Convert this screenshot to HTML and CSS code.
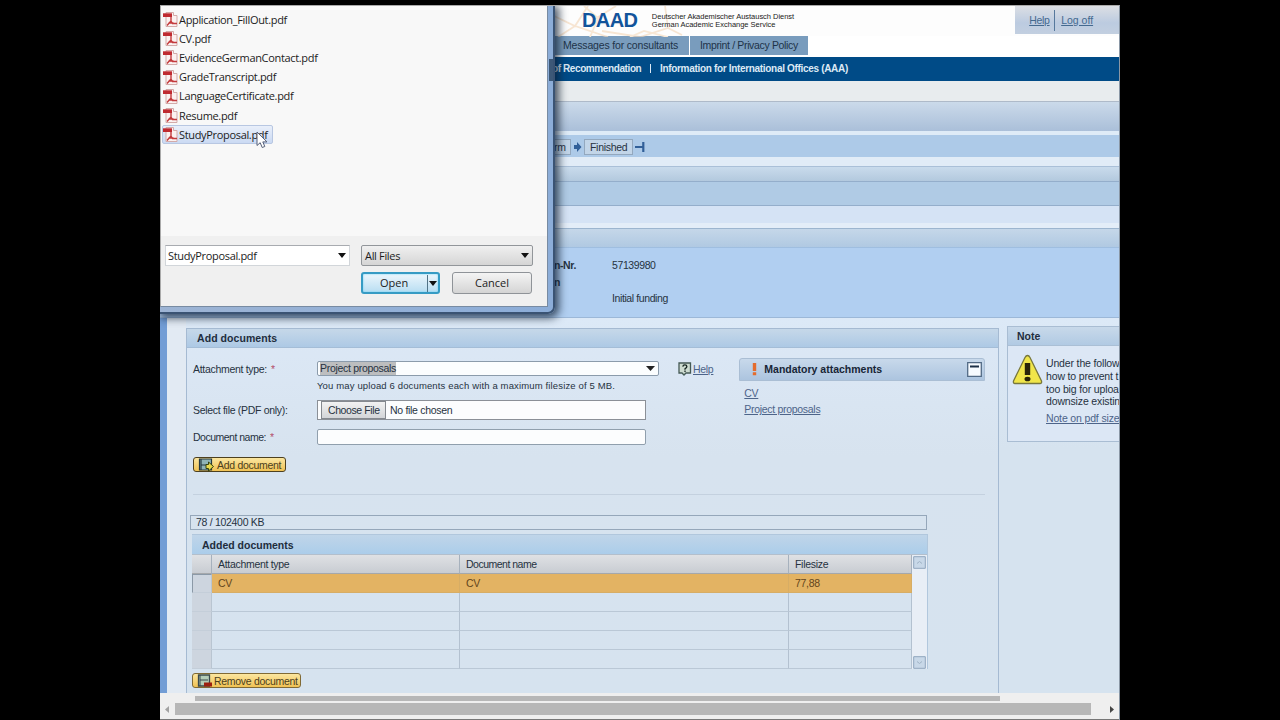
FILE: index.html
```html
<!DOCTYPE html>
<html lang="en">
<head>
<meta charset="utf-8">
<title>DAAD Portal - Add documents</title>
<link rel="stylesheet" href="styles.css">
</head>
<body>
<div class="stage">
  <header class="masthead">
    <svg class="web" width="170" height="31" viewBox="0 0 170 31" fill="none" stroke="#f5d9bc" stroke-width="1.800"><path d="M0 8L25 20L38 0M8 31L25 20L58 31M45 13L66 0M52 25L90 31L118 22L132 29M115 0L118 22" opacity=".65"/><path d="M34 0L48 12L40 31M80 31L94 25L118 31" stroke="#f9e8d5"/></svg>
    <div class="logo">DAAD</div>
    <div class="tagline"><div class="tag-de">Deutscher Akademischer Austausch Dienst</div><div class="tag-en">German Academic Exchange Service</div></div>
    <div class="session"><a class="s-help">Help</a><i class="sep"></i><a class="s-log">Log off</a></div>
  </header>
  <nav class="tabs"><span class="tab tab-msg"><b class="t-msg">Messages for consultants</b></span><span class="tab tab-imp"><b class="t-imp">Imprint / Privacy Policy</b></span></nav>
  <nav class="mainnav"><span class="n-rec">of Recommendation</span><i class="bar"></i><span class="n-info">Information for International Offices (AAA)</span></nav>
  <div class="band-grey"></div>
  <div class="band-title"></div>
  <div class="roadmap">
    <span class="step step-form">rm</span>
    <svg width="9" height="10" viewBox="0 0 9 10"><path d="M1 3h3V0l4.500 5L4 10V7H1z" fill="#315f98"/></svg>
    <span class="step step-fin">Finished</span>
    <svg width="10" height="12" viewBox="0 0 10 12"><path d="M0 6h8M8.300 1v10" stroke="#315f98" stroke-width="2.200"/></svg>
  </div>
  <div class="band-head"></div>
  <div class="band-body"></div>
  <div class="band-pale"></div>
  <div class="band-head2"></div>
  <section class="summary">
    <div class="k-nr">n-Nr.</div><div class="v-nr">57139980</div>
    <div class="k-n">n</div><div></div>
    <div></div><div class="v-init">Initial funding</div>
  </section>
  <main class="content">
    <div class="rail"></div>
    <section class="panel">
      <h2 class="panel-title"><span class="t-add">Add documents</span></h2>
      <div class="panel-top">
        <div class="form">
          <div class="field f-type"><label><span class="l-type">Attachment type:</span><em>*</em></label>
            <div class="select"><span class="picked">Project proposals</span><svg width="9" height="5" viewBox="0 0 9 5"><path d="M0 0h9L4.500 5z" fill="#222"/></svg></div>
            <a class="help"><svg width="14" height="14" viewBox="0 0 14 14"><path d="M1 1h11.500v10H8l-2 2-2-2H1z" fill="#cddbd0" stroke="#455a55" stroke-width="1.300"/><path d="M4.800 4.600Q5 2.800 6.900 2.800T8.900 4.500Q8.900 5.600 7 6.800V7.700M7 8.600v1.300" fill="none" stroke="#14231f" stroke-width="1.300"/></svg><span class="l-help">Help</span></a>
          </div>
          <div class="hint"><span>You may upload 6 documents each with a maximum filesize of 5 MB.</span></div>
          <div class="field f-file"><label><span class="l-file">Select file (PDF only):</span></label>
            <div class="file"><span class="choose"><b>Choose File</b></span><span class="nofile">No file chosen</span></div></div>
          <div class="field f-name"><label><span class="l-name">Document name:</span><em>*</em></label><div class="input"></div></div>
          <div class="btn btn-add"><svg width="17" height="14" viewBox="0 0 17 14"><path d="M1.500 1h12v11h-12z" fill="#8fb3b5" stroke="#263940" stroke-width="1.200"/><path d="M3 1v11M3 7h8" stroke="#263940" stroke-width="1.200"/><path d="M8 6.500h2.500V4l5 4.500-5 4.500v-2.500H8z" fill="#e9d94e" stroke="#34440f"/></svg><span>Add document</span></div>
        </div>
        <aside class="mandatory">
          <div class="mand-head"><svg width="5" height="13" viewBox="0 0 5 13"><path d="M.8 0h3.400v8H.8zM.8 9.300h3.400v3H.8z" fill="#e46c2d"/></svg><b>Mandatory attachments</b><svg class="mini" width="15" height="15" viewBox="0 0 15 15"><path d="M.7.700h13.600v13.600H.7z" fill="#f7fbff" stroke="#526a85" stroke-width="1.300"/><path d="M3 4.500h9" stroke="#1d3047" stroke-width="2"/></svg></div>
          <a class="m-cv">CV</a><a class="m-pp">Project proposals</a>
        </aside>
      </div>
      <div class="quota"><span>78 / 102400 KB</span></div>
      <section class="docs">
        <h3><span>Added documents</span></h3>
        <div class="docs-body">
          <div class="grid">
            <div class="cell head sel"></div><div class="cell head"><span class="h-type">Attachment type</span></div><div class="cell head"><span class="h-name">Document name</span></div><div class="cell head"><span class="h-size">Filesize</span></div>
            <div class="cell sel sel-on"></div><div class="cell on">CV</div><div class="cell on">CV</div><div class="cell on">77,88</div>
            <div class="cell sel"></div><div class="cell"></div><div class="cell"></div><div class="cell"></div>
            <div class="cell sel"></div><div class="cell"></div><div class="cell"></div><div class="cell"></div>
            <div class="cell sel"></div><div class="cell"></div><div class="cell"></div><div class="cell"></div>
            <div class="cell sel"></div><div class="cell"></div><div class="cell"></div><div class="cell"></div>
          </div>
          <div class="vscroll"><svg width="13" height="13" viewBox="0 0 13 13"><path d="M.7.700h11.600v11.600H.7z" fill="#c8d8e8" stroke="#8fa6bd"/><path d="M4 7.500l2.500-2 2.500 2" fill="none" stroke="#9fb2c5"/></svg><svg width="13" height="13" viewBox="0 0 13 13"><path d="M.7.700h11.600v11.600H.7z" fill="#c8d8e8" stroke="#8fa6bd"/><path d="M4 5.500l2.500 2 2.500-2" fill="none" stroke="#9fb2c5"/></svg></div>
        </div>
      </section>
      <div class="btn btn-rem"><svg width="16" height="14" viewBox="0 0 16 14"><path d="M1.500 1h11v11h-11z" fill="#b4cdb7" stroke="#3a494d" stroke-width="1.300"/><path d="M3 1v11M3 6h8" stroke="#3a494d"/><path d="M7 8.500h8v4H7z" fill="#9c2011"/></svg><span>Remove document</span></div>
    </section>
    <aside class="note">
      <h2><span>Note</span></h2>
      <div class="note-body"><svg width="31" height="31" viewBox="0 0 31 31"><path d="M15.500 1.500Q17 1.500 18 3.500L29.500 27Q30 29.500 28 29.500H3Q1 29.500 1.500 27L13 3.500Q14 1.500 15.500 1.500z" fill="#f1e64a" stroke="#77773d" stroke-width="1.300"/><path d="M12.800 9h5.400v12h-5.400z" fill="#29240a"/><ellipse cx="15.500" cy="25" rx="3" ry="2.300" fill="#29240a"/></svg>
        <div class="note-text"><div class="nt1">Under the follow</div><div class="nt2">how to prevent t</div><div class="nt3">too big for uploa</div><div class="nt4">downsize existin</div><a>Note on pdf size</a></div></div>
    </aside>
  </main>
  <footer class="scrolls">
    <div class="h1"><i></i></div>
    <div class="h2"><svg width="5" height="7" viewBox="0 0 5 7"><path d="M4 0v7L0 3.500z" fill="#a2a2a2"/></svg><i></i><svg class="rt" width="5" height="7" viewBox="0 0 5 7"><path d="M0 0v7l4-3.500z" fill="#444"/></svg></div>
  </footer>

  <section class="dialog">
    <div class="frame">
      <ul class="files">
        <li><svg><use href="#pdf"/></svg><span class="f1">Application_FillOut.pdf</span></li>
        <li><svg><use href="#pdf"/></svg><span class="f2">CV.pdf</span></li>
        <li><svg><use href="#pdf"/></svg><span class="f3">EvidenceGermanContact.pdf</span></li>
        <li><svg><use href="#pdf"/></svg><span class="f4">GradeTranscript.pdf</span></li>
        <li><svg><use href="#pdf"/></svg><span class="f5">LanguageCertificate.pdf</span></li>
        <li><svg><use href="#pdf"/></svg><span class="f6">Resume.pdf</span></li>
        <li class="hot"><svg><use href="#pdf"/></svg><span class="f7">StudyProposal.pdf</span></li>
      </ul>
      <div class="controls">
        <div class="fname"><span>StudyProposal.pdf</span><i class="arr"></i></div>
        <div class="right">
          <div class="ftype"><span>All Files</span><i class="arr"></i></div>
          <div class="buttons"><div class="open"><span>Open</span><i class="split"></i><i class="arr"></i></div><div class="cancel"><span>Cancel</span></div></div>
        </div>
      </div>
    </div>
    <i class="glint"></i>
  </section>
  <svg class="cursor" width="13" height="18" viewBox="0 0 13 18"><path d="M1 1v13.500l3.200-2.800 2 4.800 2.600-1-2-4.600H11z" fill="#fff" stroke="#555f78"/></svg>
</div>
<svg width="0" height="0" class="defs"><symbol id="pdf" viewBox="0 0 15 15"><path d="M3 .5h7.500v3H14v11H3z" fill="#fbf1f0" stroke="#d3aaa9"/><path d="M0 1.300h9v3.700H0z" fill="#bf2a30"/><path d="M8 5v4L4 13.500M8 9l1.500 2.500H14M5.500 11h5" fill="none" stroke="#c33a3c" stroke-width="1.400"/></symbol></svg>
</body>
</html>
```
FILE: styles.css
```css
* { box-sizing: border-box; }
body { margin: 0; background: #000; height: 720px; overflow: hidden; padding: 5px 0 0 160px; font: 10.5px/14px "Liberation Sans", Arial, sans-serif; color: #26323f; letter-spacing: -.3px; }
h2, h3, ul { margin: 0; padding: 0; font-size: inherit; list-style: none; }
h2, h3, .mand-head { letter-spacing: 0; }
span, b, a, .tagline div, .note-text div { white-space: nowrap; }
i { display: block; }
svg { display: block; flex: none; }
a { text-decoration: underline; color: #4d6489; }
.defs { position: absolute; }
.stage { position: relative; width: 960px; height: 715px; overflow: hidden; background: #dce8f5; display: flex; flex-direction: column; border-top: 1px solid #aaa; border-right: 1px solid #8a97a5; }
.stage > * { flex: none; }

.masthead { height: 30px; background: #fdfdfd; display: flex; padding-left: 422px; position: relative; }
.web { position: absolute; left: 390px; top: 0; }
.logo { position: relative; font: bold 20px/29px "Liberation Sans", Arial, sans-serif; color: #12549b; width: 70px; letter-spacing: -.6px; }
.tagline { position: relative; font-size: 7.500px; line-height: 8px; padding-top: 7px; width: 364px; color: #222; letter-spacing: 0; }
.tag-de { letter-spacing: -.03px; }
.tag-en { letter-spacing: -.02px; }
.session { width: 104px; height: 28px; background: linear-gradient(#dcdfe4, #bccbe0 60%, #c2cfe0); display: flex; align-items: center; padding-left: 14px; }
.session a { color: #44698f; }
.s-help { width: 25px; }
.s-log { letter-spacing: 0; }
.sep { width: 1px; height: 21px; background: #56789c; margin-right: 6px; }
.tabs { height: 21px; background: #fff; display: flex; gap: 1px; padding: 0 0 2px 390px; }
.tab { background: #799cbd; height: 19px; line-height: 19px; color: #1d3349; }
.tab b { font-weight: normal; }
.t-msg { letter-spacing: -.17px; }
.t-imp { letter-spacing: -.35px; }
.tab-msg { width: 139px; padding-left: 13px; }
.tab-imp { width: 118px; padding-left: 10px; }
.mainnav { height: 24px; background: #004b87; color: #dce9f5; font-weight: bold; font-size: 10px; letter-spacing: -.32px; display: flex; align-items: center; padding: 0 0 1px 392px; }
.n-rec { width: 98px; letter-spacing: -.4px; }
.bar { width: 1px; height: 9px; background: #dce9f5; margin-right: 9px; }
.band-grey { height: 20px; background: #e8ecee; }
.band-title { height: 34px; border-top: 1px solid #aebac9; border-bottom: 4px solid #deebf7; background: linear-gradient(#cbdaea, #aabfd9); }
.roadmap { height: 31px; background: #adcae8; border-bottom: 9px solid #e1ecf7; display: flex; align-items: center; gap: 2px; padding-left: 380px; padding-top: 2px; }
.step { height: 16px; line-height: 15px; border: 1px solid #93a8be; background: #c2d5e8; }
.step-form { width: 31px; padding-left: 13px; }
.step-fin { width: 49px; padding-left: 5px; }
.band-head { height: 15px; background: linear-gradient(#c9dbec, #b3c9de); border-top: 1px solid #aac0d8; }
.band-body { height: 25px; background: #b0cbe5; border: solid #94aecb; border-width: 1px 0; }
.band-pale { height: 22px; background: #d5e3f5; border-bottom: 5px solid #e3edf8; }
.band-head2 { height: 20px; background: linear-gradient(#c5d7e9, #b0c9e2); border-top: 1px solid #9cb5cf; border-bottom: 1px solid #9fbee0; }
.summary { height: 70px; background: #b1cff1; border-bottom: 1px solid #9cb8d8; display: grid; grid-template-columns: 58px 1fr; grid-template-rows: 17px 16px 17px; line-height: 17px; padding: 9px 0 0 394px; letter-spacing: -.4px; }
.k-nr, .k-n { font-weight: bold; }

.content { height: 375px; display: flex; background: linear-gradient(#dce9f7, #d6e3ef 35%); }
.rail { width: 27px; background: #e2eaf3; border-left: 7px solid #729dd5; }
.panel { width: 813px; height: 365px; margin-top: 10px; border: 1px solid #a5bad2; border-bottom: 0; background: linear-gradient(#dce8f6 0, #d7e3ef 35%, #d6e3ef); }
.panel-title { height: 19px; line-height: 18px; padding-left: 10px; background: linear-gradient(#c6d8e9, #adc9e5); border-bottom: 1px solid #a4bdd7; color: #1f2d3d; letter-spacing: .07px; }
.panel-top { height: 147px; margin: 0 13px 0 6px; border-bottom: 1px solid #c4d1df; display: flex; }
.form { width: 547px; }
.field { display: flex; align-items: center; }
.field label { width: 124px; display: flex; gap: 4px; }
.field em { color: #b3506c; font-style: normal; }
.l-name { letter-spacing: -.5px; }
.f-type { margin-top: 13px; height: 15px; }
.select { width: 342px; height: 15px; border: 1px solid #8b9bab; border-radius: 2px; background: #fbfdfe; display: flex; align-items: center; justify-content: space-between; padding: 0 3px 0 2px; margin-right: 19px; }
.picked { background: #bdbebf; line-height: 13px; }
.help { display: flex; align-items: center; gap: 1px; }
.hint { font-size: 9.500px; padding: 3px 0 0 124px; height: 17px; letter-spacing: .14px; }
.f-file { height: 20px; margin-top: 7px; }
.file { width: 329px; height: 20px; border: 1px solid #8b9097; background: #fcfdfe; display: flex; align-items: center; padding-left: 3px; }
.choose { width: 65px; height: 18px; line-height: 16px; border: 1px solid #85898f; background: linear-gradient(#f2f2f2, #d3d5d8); padding-left: 6px; margin-right: 4px; letter-spacing: -.4px; }
.choose b { font-weight: normal; }
.f-name { height: 16px; margin-top: 9px; }
.input { width: 329px; height: 16px; border: 1px solid #909fad; border-radius: 2px; background: #fcfdfe; }
.btn { display: flex; align-items: center; border: 1px solid #806a35; border-radius: 3px; background: linear-gradient(#fbe6a0, #f0c254); height: 15px; padding-left: 4px; gap: 1px; color: #4c401c; }
.btn-add { width: 93px; margin-top: 12px; border-color: #4d401f; gap: 2px; }
.mandatory { width: 246px; padding-top: 10px; display: flex; flex-direction: column; }
.mand-head { height: 23px; border: 1px solid #aabed4; border-radius: 3px 3px 0 0; background: linear-gradient(#c8d9eb, #acc4df); display: flex; align-items: center; padding: 0 2px 1px 12px; color: #172536; }
.mand-head b { margin-left: 7px; }
.mini { margin-left: auto; }
.mandatory a { padding-left: 5px; width: max-content; }
.m-cv { margin-top: 5px; }
.m-pp { margin-top: 2px; }
.quota { width: 737px; height: 15px; margin: 20px 0 0 3px; border: 1px solid #95a7ba; line-height: 13px; padding-left: 5px; }
.docs { width: 736px; margin: 4px 0 0 5px; border-top: 1px solid #b1c7dd; border-right: 1px solid #b1c7dd; }
.docs h3 { height: 20px; line-height: 20px; padding-left: 10px; background: linear-gradient(#c0d5e9, #abcdea); border-bottom: 1px solid #b3bfcc; color: #1f2d3d; }
.docs-body { display: flex; height: 114px; }
.grid { width: 720px; display: grid; grid-template-columns: 20px 248px 329px 123px; grid-template-rows: repeat(6, 19px); }
.cell { border-right: 1px solid #b3c1d0; border-bottom: 1px solid #bac8d6; padding-left: 6px; line-height: 18px; }
.h-name { letter-spacing: -.5px; }
.cell.sel { background: #cdd5df; border-right-color: #b9c5d1; border-bottom-color: #c4ced9; }
.cell.head { background: linear-gradient(#dfe1e4, #c8ccd2); border-right-color: #a6b1bd; border-bottom-color: #a5a8ab; }
.cell.on { background: #e3b363; border-color: #d7ad65; color: #62451d; }
.cell.sel-on { border-left: 1px solid #8b99a7; border-top: 1px solid #8b99a7; }
.vscroll { width: 15px; background: #e8eef6; display: flex; flex-direction: column; justify-content: space-between; align-items: center; padding-top: 1px; }
.btn-rem { width: 109px; margin: 4px 0 0 5px; }
.note { width: 124px; height: 116px; margin: 8px -12px 0 8px; border: 1px solid #a9bdd3; background: #dce7f5; flex: none; }
.note h2 { height: 19px; line-height: 18px; padding-left: 9px; background: linear-gradient(#c8d9ea, #b1cae3); border-bottom: 1px solid #aabfd5; color: #1f2d3d; }
.note-body { display: flex; padding: 8px 0 0 4px; gap: 3px; letter-spacing: -.15px; }
.note-text { line-height: 12.800px; padding-top: 3px; }
.note-text a { display: block; margin-top: 4px; }

.scrolls { height: 27px; background: #efefef; border-bottom: 1px solid #777; }
.h1 { height: 8px; padding: 3px 0 0 35px; }
.h1 i { width: 805px; height: 5px; background: #b7b7b7; }
.h2 { display: flex; align-items: center; padding: 2px 4px 0 5px; }
.h2 i { width: 916px; height: 12px; margin-left: 5px; background: #b7b7b7; }
.rt { margin-left: auto; }

.dialog { position: absolute; left: 0; top: 0; width: 395px; height: 308px; background: linear-gradient(90deg, #9db4d4, #8cadd8); border: solid #3a5373; border-width: 0 2px 2px 0; border-radius: 0 0 7px 0; box-shadow: 2px 2px 9px 2px rgba(15, 30, 50, .75); }
.glint { position: absolute; right: 0; top: 53px; width: 4px; height: 22px; background: #3d5877; }
.frame { width: 388px; height: 301px; background: #f0f0f0; border: 1px solid #788ba2; border-width: 0 1px 1px 1px; border-left-color: #aaa; font: 11px/16px "Open Sans", "Noto Sans", sans-serif; letter-spacing: -.33px; color: #1c1c1c; }
.files { height: 230px; background: #f8f8f8; padding: 4px 0 0 1px; }
.files li { height: 19.200px; display: flex; align-items: center; gap: 1px; padding-left: 1px; width: 111px; }
.files li svg { width: 15px; height: 15px; }
.files .hot { background: linear-gradient(#e9effa, #cbdaf3); border: 1px solid #b8c7e2; border-radius: 2px; padding-left: 0; }
.controls { display: flex; padding: 9px 0 0 4px; gap: 11px; }
.fname { width: 185px; height: 21px; background: #fff; border: 1px solid #d2d6da; border-top-color: #a8abb0; display: flex; align-items: center; justify-content: space-between; padding: 0 3px 0 2px; }
.arr { border: solid transparent; border-width: 5px 4px 0; border-top-color: #111; width: 0; height: 0; }
.right { display: flex; flex-direction: column; gap: 6px; }
.ftype { width: 172px; height: 21px; border: 1px solid #92969a; border-radius: 2px; background: linear-gradient(#f0f0f0, #d5d5d5); display: flex; align-items: center; justify-content: space-between; padding: 0 3px; }
.buttons { display: flex; gap: 12px; }
.open { width: 79px; height: 22px; border: 2px solid #369bc4; border-radius: 3px; background: linear-gradient(#ecf6fc, #b9def2); box-shadow: inset 0 0 2px #65d2f5; display: flex; align-items: center; padding-left: 17px; }
.open span { width: 47px; }
.open span, .cancel span { letter-spacing: 0; }
.split { width: 1px; height: 17px; background: #517488; margin-right: 1px; }
.cancel { width: 80px; height: 22px; border: 1px solid #8f9398; border-radius: 3px; background: linear-gradient(#f4f4f4, #d4d4d4); display: flex; align-items: center; justify-content: center; }
.cursor { position: absolute; left: 96px; top: 125px; }
```
